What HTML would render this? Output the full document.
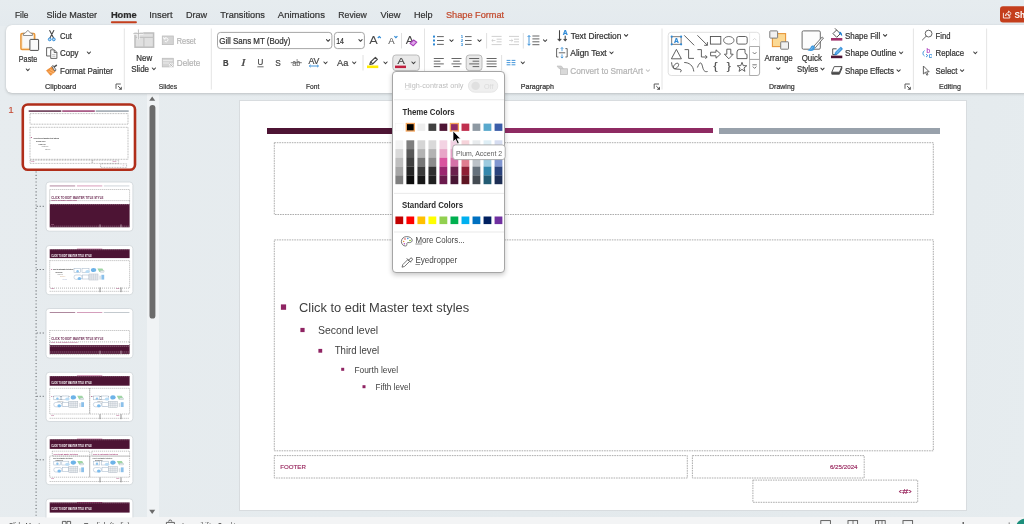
<!DOCTYPE html>
<html lang="en"><head><meta charset="utf-8"><title>PowerPoint - Slide Master</title>
<style>
*{box-sizing:border-box;margin:0;padding:0}
html,body{width:1024px;height:524px;overflow:hidden;background:#e6ebee}
body{font-family:"Liberation Sans", sans-serif;position:relative}
#app{position:absolute;left:0;top:0;width:1024px;height:524px;overflow:hidden;
 background:linear-gradient(100deg,#e7ecef 0%,#e5ebee 40%,#e3e9ec 70%,#e6ecef 100%)}
#tabbar{position:absolute;left:0;top:0;width:1024px;height:26px;background:linear-gradient(180deg,#e6ecef,#e4eaee)}
#ribbon{position:absolute;left:5.5px;top:25px;width:1030px;height:67.5px;background:#fff;border-radius:6px;
 box-shadow:0 1px 3px rgba(0,0,0,.18),0 0 1px rgba(0,0,0,.12)}
#leftpane{position:absolute;left:0;top:94px;width:160px;height:424px}
#track{position:absolute;left:146.6px;top:94px;width:12.4px;height:423.4px;background:#f0f3f5}
#slide{position:absolute;left:239.2px;top:99.8px;width:728px;height:411px;background:#fff;border:1px solid #d8dcdf}
.ph{position:absolute;border:1px dotted #9a9a9a}
.bar{position:absolute;top:128px;height:5.5px}
#status{position:absolute;left:0;top:517.4px;width:1024px;height:8px;background:#f3f4f5}
#dd{position:absolute;left:392.1px;top:71px;width:112.8px;height:202.3px;background:#fff;border:1px solid #a6a6a6;border-radius:4px;
 box-shadow:0 2px 5px rgba(0,0,0,.22)}
svg{position:absolute;left:0;top:0;overflow:visible;will-change:transform}
svg text{font-family:"Liberation Sans", sans-serif;white-space:pre}
#ribbon-items text{stroke-width:0.22px}
</style></head>
<body>
<div id="app">
<div id="tabbar"></div>
<div id="leftpane"></div><div id="track"></div>
<div id="slide"></div>
<div class="bar" style="left:266.5px;width:221.2px;background:#4d1434"></div>
<div class="bar" style="left:493.9px;width:219.4px;top:128.2px;height:4.6px;background:#8e2a62"></div>
<div class="bar" style="left:719.3px;width:221.2px;top:127.9px;height:5.9px;background:#98a1ab"></div>
<svg id="phs" width="1024" height="524" viewBox="0 0 1024 524"><rect x="274.30" y="142.70" width="659.00" height="71.80" fill="none" stroke="#8a8a8a" stroke-width="0.7" stroke-dasharray="1.6 0.9"/>
<rect x="274.30" y="239.90" width="659.00" height="210.90" fill="none" stroke="#8a8a8a" stroke-width="0.7" stroke-dasharray="1.6 0.9"/>
<rect x="274.30" y="455.60" width="413.00" height="22.40" fill="none" stroke="#8a8a8a" stroke-width="0.7" stroke-dasharray="1.6 0.9"/>
<rect x="692.40" y="455.60" width="171.80" height="22.40" fill="none" stroke="#8a8a8a" stroke-width="0.7" stroke-dasharray="1.6 0.9"/>
<rect x="752.90" y="480.10" width="164.80" height="22.20" fill="none" stroke="#8a8a8a" stroke-width="0.7" stroke-dasharray="1.6 0.9"/></svg>
<div id="status"></div>
<div id="ribbon"></div>
<svg id="main" width="1024" height="524" viewBox="0 0 1024 524">
<defs><clipPath id="cpl"><rect x="0" y="93" width="160" height="424.4"/></clipPath></defs>
<g id="thumbs" clip-path="url(#cpl)"><path d="M36.10 171.50L36.10 517.50" stroke="#6f7478" stroke-width="1.1" fill="none" stroke-dasharray="1.1 2.2"/>
<path d="M36.60 206.30L44.60 206.30" stroke="#6f7478" stroke-width="0.9" fill="none" stroke-dasharray="1.4 1.6"/>
<path d="M36.60 269.50L44.60 269.50" stroke="#6f7478" stroke-width="0.9" fill="none" stroke-dasharray="1.4 1.6"/>
<path d="M36.60 333.00L44.60 333.00" stroke="#6f7478" stroke-width="0.9" fill="none" stroke-dasharray="1.4 1.6"/>
<path d="M36.60 396.30L44.60 396.30" stroke="#6f7478" stroke-width="0.9" fill="none" stroke-dasharray="1.4 1.6"/>
<path d="M36.60 459.80L44.60 459.80" stroke="#6f7478" stroke-width="0.9" fill="none" stroke-dasharray="1.4 1.6"/>
<path d="M36.60 523.00L44.60 523.00" stroke="#6f7478" stroke-width="0.9" fill="none" stroke-dasharray="1.4 1.6"/>
<rect x="22.80" y="104.50" width="112.20" height="65.20" fill="#fff" stroke="#b02e1a" stroke-width="2.6" rx="5"/>
<text x="8.30" y="113.00" font-size="9.8" fill="#c4472f" stroke="#c4472f" stroke-width="0" style="stroke-width:0.1px">1</text>
<rect x="28.70" y="110.40" width="32.60" height="1.35" fill="#4d1434"/>
<rect x="62.20" y="110.40" width="32.60" height="1.35" fill="#8e2a62"/>
<rect x="95.70" y="110.40" width="33.00" height="1.35" fill="#8c97a1"/>
<rect x="30.00" y="113.60" width="98.00" height="10.60" fill="none" stroke="#777" stroke-width="0.55" stroke-dasharray="0.9 0.7"/>
<rect x="30.00" y="127.30" width="98.00" height="32.00" fill="none" stroke="#777" stroke-width="0.55" stroke-dasharray="0.9 0.7"/>
<rect x="30.90" y="137.10" width="0.90" height="0.90" fill="#a1306b"/>
<g transform="translate(33.40 138.70) scale(0.125)"><text x="0.00" y="0.00" font-size="20.0" fill="#2a2a2a" stroke="#2a2a2a" stroke-width="0" textLength="204.80" lengthAdjust="spacingAndGlyphs" font-weight="bold">Click to edit Master text styles</text></g>
<g transform="translate(36.00 141.80) scale(0.125)"><text x="0.00" y="0.00" font-size="16.8" fill="#333" stroke="#333" stroke-width="0" textLength="75.20" lengthAdjust="spacingAndGlyphs" font-weight="bold">Second level</text></g>
<g transform="translate(38.60 144.50) scale(0.125)"><text x="0.00" y="0.00" font-size="16.0" fill="#333" stroke="#333" stroke-width="0" textLength="56.00" lengthAdjust="spacingAndGlyphs" font-weight="bold">Third level</text></g>
<g transform="translate(41.80 147.30) scale(0.125)"><text x="0.00" y="0.00" font-size="16.0" fill="#555" stroke="#555" stroke-width="0" textLength="51.20" lengthAdjust="spacingAndGlyphs">Fourth level</text></g>
<g transform="translate(45.00 150.00) scale(0.125)"><text x="0.00" y="0.00" font-size="16.0" fill="#555" stroke="#555" stroke-width="0" textLength="41.60" lengthAdjust="spacingAndGlyphs">Fifth level</text></g>
<rect x="30.00" y="160.20" width="62.00" height="3.20" fill="none" stroke="#777" stroke-width="0.5" stroke-dasharray="0.9 0.7"/>
<rect x="92.60" y="160.20" width="26.00" height="3.20" fill="none" stroke="#777" stroke-width="0.5" stroke-dasharray="0.9 0.7"/>
<rect x="100.60" y="163.80" width="26.00" height="3.60" fill="none" stroke="#777" stroke-width="0.5" stroke-dasharray="0.9 0.7"/>
<g transform="translate(30.80 162.30) scale(0.125)"><text x="0.00" y="0.00" font-size="7.2" fill="#a1306b" stroke="#a1306b" stroke-width="0" textLength="28.80" lengthAdjust="spacingAndGlyphs">FOOTER</text></g>
<g transform="translate(112.40 162.30) scale(0.125)"><text x="0.00" y="0.00" font-size="7.2" fill="#a1306b" stroke="#a1306b" stroke-width="0" textLength="32.00" lengthAdjust="spacingAndGlyphs">6/25/2024</text></g>
<g transform="translate(122.60 166.20) scale(0.125)"><text x="0.00" y="0.00" font-size="8.8" fill="#a1306b" stroke="#a1306b" stroke-width="0" textLength="14.40" lengthAdjust="spacingAndGlyphs">‹#›</text></g>
<rect x="46.00" y="182.00" width="86.90" height="49.20" fill="#fff" stroke="#d3d8db" stroke-width="0.9" rx="3.2"/>
<rect x="49.70" y="185.20" width="25.50" height="1.40" fill="#c9aabb"/>
<rect x="76.90" y="185.20" width="25.40" height="1.40" fill="#e4b9cf"/>
<rect x="103.80" y="185.20" width="25.60" height="1.40" fill="#dde0e4"/>
<rect x="49.70" y="189.50" width="79.90" height="11.10" fill="none" stroke="#686868" stroke-width="0.5" stroke-dasharray="1 1"/>
<g transform="translate(51.20 198.90) scale(0.125)"><text x="0.00" y="0.00" font-size="24.0" fill="#6b2a52" stroke="#6b2a52" stroke-width="0" textLength="416.80" lengthAdjust="spacingAndGlyphs" font-weight="bold">CLICK TO EDIT MASTER TITLE STYLE</text></g>
<g transform="translate(51.20 201.20) scale(0.125)"><text x="0.00" y="0.00" font-size="13.6" fill="#8a2a62" stroke="#8a2a62" stroke-width="0" textLength="206.40" lengthAdjust="spacingAndGlyphs" font-weight="bold">Click to edit Master subtitle style</text></g>
<path d="M49.7 200.6V204 M129.6 200.6V204" fill="none" stroke="#686868" stroke-width="0.6" stroke-dasharray="1 1"/>
<rect x="49.70" y="204.00" width="79.90" height="23.30" fill="#4d1434"/>
<path d="M49.70 204.60L129.60 204.60" stroke="#e9dfe4" stroke-width="0.5" fill="none" stroke-dasharray="1 1"/>
<path d="M49.70 226.20L129.60 226.20" stroke="#e9dfe4" stroke-width="0.5" fill="none" stroke-dasharray="1 1"/>
<path d="M100 224.4V228 M121 224.4V228" fill="none" stroke="#efe6ea" stroke-width="0.6"/>
<g transform="translate(51.00 225.40) scale(0.125)"><text x="0.00" y="0.00" font-size="7.2" fill="#d99abb" stroke="#d99abb" stroke-width="0" textLength="24.00" lengthAdjust="spacingAndGlyphs">FOOTER</text></g>
<rect x="46.00" y="245.50" width="86.90" height="49.20" fill="#fff" stroke="#d3d8db" stroke-width="0.9" rx="3.2"/>
<rect x="76.90" y="248.70" width="25.40" height="1.00" fill="#b04a82"/>
<rect x="49.70" y="249.20" width="79.90" height="8.90" fill="#4d1434"/>
<path d="M49.70 249.70L129.60 249.70" stroke="#c9b3bf" stroke-width="0.5" fill="none" stroke-dasharray="1 1"/>
<g transform="translate(51.20 256.90) scale(0.125)"><text x="0.00" y="0.00" font-size="20.8" fill="#fff" stroke="#fff" stroke-width="0" textLength="324.80" lengthAdjust="spacingAndGlyphs" font-weight="bold">CLICK TO EDIT MASTER TITLE STYLE</text></g>
<rect x="49.70" y="260.60" width="79.90" height="27.50" fill="none" stroke="#686868" stroke-width="0.5" stroke-dasharray="1 1"/>
<rect x="51.30" y="269.10" width="0.80" height="0.80" fill="#a1306b"/><g transform="translate(52.90 270.10) scale(0.125)"><text x="0.00" y="0.00" font-size="15.2" fill="#222" stroke="#222" stroke-width="0" textLength="163.20" lengthAdjust="spacingAndGlyphs" font-weight="bold">Click to edit Master text styles</text></g><g transform="translate(55.40 273.00) scale(0.125)"><text x="0.00" y="0.00" font-size="12.8" fill="#333" stroke="#333" stroke-width="0" textLength="57.60" lengthAdjust="spacingAndGlyphs" font-weight="bold">Second level</text></g><g transform="translate(57.50 275.00) scale(0.125)"><text x="0.00" y="0.00" font-size="11.2" fill="#777" stroke="#777" stroke-width="0" textLength="44.80" lengthAdjust="spacingAndGlyphs">Third level</text></g><g transform="translate(60.00 277.30) scale(0.125)"><text x="0.00" y="0.00" font-size="10.4" fill="#c9a07a" stroke="#c9a07a" stroke-width="0" textLength="40.80" lengthAdjust="spacingAndGlyphs">Fourth level</text></g><g transform="translate(62.60 279.80) scale(0.125)"><text x="0.00" y="0.00" font-size="10.4" fill="#9aa6c8" stroke="#9aa6c8" stroke-width="0" textLength="36.00" lengthAdjust="spacingAndGlyphs">Fifth level</text></g>
<rect x="74.00" y="268.60" width="6.40" height="3.80" fill="#fff" stroke="#9fb3c8" stroke-width="0.5"/><rect x="82.00" y="268.60" width="7.00" height="3.80" fill="#fff" stroke="#9fb3c8" stroke-width="0.5"/><circle cx="77.60" cy="271.20" r="1.2" fill="#8cc4ef"/><ellipse cx="93.60" cy="270.00" rx="2.7" ry="2.1" fill="#6db3e8"/><ellipse cx="87.60" cy="271.60" rx="2.2" ry="1.5" fill="#b9dcf5"/><path d="M97.40 268.40h5l2 3.6h-5z" fill="#9fd6a4"/><rect x="100.40" y="270.60" width="3.60" height="1.80" fill="#e4e8ec" stroke="#b8c0c8" stroke-width="0.3"/><rect x="74.00" y="275.00" width="8.00" height="4.40" fill="#fff" stroke="#9fb3c8" stroke-width="0.5" rx="2"/><ellipse cx="79.40" cy="278.40" rx="1.8" ry="1.5" fill="#7dbcec"/><rect x="82.60" y="275.00" width="6.40" height="4.00" fill="#fff" stroke="#9fb3c8" stroke-width="0.5"/><rect x="89.00" y="274.00" width="9.00" height="6.00" fill="#eceff2" stroke="#aab4be" stroke-width="0.45"/><path d="M91.20 274.00v6 M93.40 274.00v6 M95.60 274.00v6 M89.00 276.00h9 M89.00 278.00h9" fill="none" stroke="#aab4be" stroke-width="0.3"/><rect x="99.40" y="275.60" width="1.40" height="4.00" fill="#d8dde2"/><rect x="101.40" y="274.80" width="2.80" height="4.80" fill="#8cc0ea"/>
<path d="M49.70 291.30L129.60 291.30" stroke="#686868" stroke-width="0.5" fill="none" stroke-dasharray="1 1"/>
<path d="M100 287.4V292.2 M121 287.4V292.2" fill="none" stroke="#444" stroke-width="0.6"/>
<g transform="translate(51.00 289.40) scale(0.125)"><text x="0.00" y="0.00" font-size="7.2" fill="#a1306b" stroke="#a1306b" stroke-width="0" textLength="24.00" lengthAdjust="spacingAndGlyphs">FOOTER</text></g><g transform="translate(116.00 289.40) scale(0.125)"><text x="0.00" y="0.00" font-size="7.2" fill="#a1306b" stroke="#a1306b" stroke-width="0" textLength="27.20" lengthAdjust="spacingAndGlyphs">6/25/2024</text></g>
<rect x="46.00" y="308.50" width="86.90" height="49.60" fill="#fff" stroke="#d3d8db" stroke-width="0.9" rx="3.2"/>
<rect x="49.70" y="312.10" width="25.50" height="0.80" fill="#9a6b86"/>
<rect x="76.90" y="312.10" width="25.40" height="0.80" fill="#c987ab"/>
<rect x="103.80" y="312.10" width="25.60" height="0.80" fill="#b4bbc2"/>
<rect x="49.70" y="330.50" width="79.90" height="11.40" fill="none" stroke="#686868" stroke-width="0.5" stroke-dasharray="1 1"/>
<g transform="translate(51.20 339.90) scale(0.125)"><text x="0.00" y="0.00" font-size="24.0" fill="#6b2a52" stroke="#6b2a52" stroke-width="0" textLength="416.80" lengthAdjust="spacingAndGlyphs" font-weight="bold">CLICK TO EDIT MASTER TITLE STYLE</text></g>
<g transform="translate(51.00 343.10) scale(0.125)"><text x="0.00" y="0.00" font-size="12.8" fill="#a1306b" stroke="#a1306b" stroke-width="0" textLength="212.00" lengthAdjust="spacingAndGlyphs">Click to edit Master text styles</text></g>
<path d="M49.7 341.9V345 M129.6 341.9V345" fill="none" stroke="#686868" stroke-width="0.6" stroke-dasharray="1 1"/>
<rect x="49.70" y="345.10" width="79.90" height="8.80" fill="#4d1434"/>
<path d="M49.70 346.30L129.60 346.30" stroke="#e9dfe4" stroke-width="0.5" fill="none" stroke-dasharray="1 1"/>
<path d="M49.70 352.00L129.60 352.00" stroke="#e9dfe4" stroke-width="0.5" fill="none" stroke-dasharray="1 1"/>
<path d="M49.70 354.60L129.60 354.60" stroke="#686868" stroke-width="0.5" fill="none" stroke-dasharray="1 1"/>
<path d="M100 350.6V355 M121 350.6V355" fill="none" stroke="#efe6ea" stroke-width="0.6"/>
<rect x="46.00" y="372.30" width="86.90" height="49.20" fill="#fff" stroke="#d3d8db" stroke-width="0.9" rx="3.2"/>
<rect x="76.90" y="375.50" width="25.40" height="1.00" fill="#b04a82"/>
<rect x="49.70" y="376.00" width="79.90" height="9.70" fill="#4d1434"/>
<path d="M49.70 376.60L129.60 376.60" stroke="#c9b3bf" stroke-width="0.5" fill="none" stroke-dasharray="1 1"/>
<g transform="translate(51.20 384.00) scale(0.125)"><text x="0.00" y="0.00" font-size="20.8" fill="#fff" stroke="#fff" stroke-width="0" textLength="324.80" lengthAdjust="spacingAndGlyphs" font-weight="bold">CLICK TO EDIT MASTER TITLE STYLE</text></g>
<rect x="49.70" y="388.30" width="40.00" height="25.70" fill="none" stroke="#686868" stroke-width="0.5" stroke-dasharray="1 1"/>
<rect x="89.70" y="388.30" width="39.90" height="25.70" fill="none" stroke="#686868" stroke-width="0.5" stroke-dasharray="1 1"/>
<rect x="51.40" y="396.00" width="0.80" height="0.80" fill="#a1306b"/><g transform="translate(53.00 397.00) scale(0.125)"><text x="0.00" y="0.00" font-size="15.2" fill="#222" stroke="#222" stroke-width="0" textLength="130.56" lengthAdjust="spacingAndGlyphs" font-weight="bold">Click to edit Master text styles</text></g><g transform="translate(55.50 399.90) scale(0.125)"><text x="0.00" y="0.00" font-size="12.8" fill="#333" stroke="#333" stroke-width="0" textLength="57.60" lengthAdjust="spacingAndGlyphs" font-weight="bold">Second level</text></g><g transform="translate(57.60 401.90) scale(0.125)"><text x="0.00" y="0.00" font-size="11.2" fill="#777" stroke="#777" stroke-width="0" textLength="44.80" lengthAdjust="spacingAndGlyphs">Third level</text></g><g transform="translate(60.10 404.20) scale(0.125)"><text x="0.00" y="0.00" font-size="10.4" fill="#c9a07a" stroke="#c9a07a" stroke-width="0" textLength="40.80" lengthAdjust="spacingAndGlyphs">Fourth level</text></g><g transform="translate(62.70 406.70) scale(0.125)"><text x="0.00" y="0.00" font-size="10.4" fill="#9aa6c8" stroke="#9aa6c8" stroke-width="0" textLength="36.00" lengthAdjust="spacingAndGlyphs">Fifth level</text></g>
<rect x="53.80" y="396.00" width="6.40" height="3.80" fill="#fff" stroke="#9fb3c8" stroke-width="0.5"/><rect x="61.80" y="396.00" width="7.00" height="3.80" fill="#fff" stroke="#9fb3c8" stroke-width="0.5"/><circle cx="57.40" cy="398.60" r="1.2" fill="#8cc4ef"/><ellipse cx="73.40" cy="397.40" rx="2.7" ry="2.1" fill="#6db3e8"/><ellipse cx="67.40" cy="399.00" rx="2.2" ry="1.5" fill="#b9dcf5"/><path d="M77.20 395.80h5l2 3.6h-5z" fill="#9fd6a4"/><rect x="80.20" y="398.00" width="3.60" height="1.80" fill="#e4e8ec" stroke="#b8c0c8" stroke-width="0.3"/><rect x="53.80" y="402.40" width="8.00" height="4.40" fill="#fff" stroke="#9fb3c8" stroke-width="0.5" rx="2"/><ellipse cx="59.20" cy="405.80" rx="1.8" ry="1.5" fill="#7dbcec"/><rect x="62.40" y="402.40" width="6.40" height="4.00" fill="#fff" stroke="#9fb3c8" stroke-width="0.5"/><rect x="68.80" y="401.40" width="9.00" height="6.00" fill="#eceff2" stroke="#aab4be" stroke-width="0.45"/><path d="M71.00 401.40v6 M73.20 401.40v6 M75.40 401.40v6 M68.80 403.40h9 M68.80 405.40h9" fill="none" stroke="#aab4be" stroke-width="0.3"/><rect x="79.20" y="403.00" width="1.40" height="4.00" fill="#d8dde2"/><rect x="81.20" y="402.20" width="2.80" height="4.80" fill="#8cc0ea"/>
<rect x="91.00" y="396.00" width="0.80" height="0.80" fill="#a1306b"/><g transform="translate(92.60 397.00) scale(0.125)"><text x="0.00" y="0.00" font-size="15.2" fill="#222" stroke="#222" stroke-width="0" textLength="130.56" lengthAdjust="spacingAndGlyphs" font-weight="bold">Click to edit Master text styles</text></g><g transform="translate(95.10 399.90) scale(0.125)"><text x="0.00" y="0.00" font-size="12.8" fill="#333" stroke="#333" stroke-width="0" textLength="57.60" lengthAdjust="spacingAndGlyphs" font-weight="bold">Second level</text></g><g transform="translate(97.20 401.90) scale(0.125)"><text x="0.00" y="0.00" font-size="11.2" fill="#777" stroke="#777" stroke-width="0" textLength="44.80" lengthAdjust="spacingAndGlyphs">Third level</text></g><g transform="translate(99.70 404.20) scale(0.125)"><text x="0.00" y="0.00" font-size="10.4" fill="#c9a07a" stroke="#c9a07a" stroke-width="0" textLength="40.80" lengthAdjust="spacingAndGlyphs">Fourth level</text></g><g transform="translate(102.30 406.70) scale(0.125)"><text x="0.00" y="0.00" font-size="10.4" fill="#9aa6c8" stroke="#9aa6c8" stroke-width="0" textLength="36.00" lengthAdjust="spacingAndGlyphs">Fifth level</text></g>
<rect x="93.40" y="396.00" width="6.40" height="3.80" fill="#fff" stroke="#9fb3c8" stroke-width="0.5"/><rect x="101.40" y="396.00" width="7.00" height="3.80" fill="#fff" stroke="#9fb3c8" stroke-width="0.5"/><circle cx="97.00" cy="398.60" r="1.2" fill="#8cc4ef"/><ellipse cx="113.00" cy="397.40" rx="2.7" ry="2.1" fill="#6db3e8"/><ellipse cx="107.00" cy="399.00" rx="2.2" ry="1.5" fill="#b9dcf5"/><path d="M116.80 395.80h5l2 3.6h-5z" fill="#9fd6a4"/><rect x="119.80" y="398.00" width="3.60" height="1.80" fill="#e4e8ec" stroke="#b8c0c8" stroke-width="0.3"/><rect x="93.40" y="402.40" width="8.00" height="4.40" fill="#fff" stroke="#9fb3c8" stroke-width="0.5" rx="2"/><ellipse cx="98.80" cy="405.80" rx="1.8" ry="1.5" fill="#7dbcec"/><rect x="102.00" y="402.40" width="6.40" height="4.00" fill="#fff" stroke="#9fb3c8" stroke-width="0.5"/><rect x="108.40" y="401.40" width="9.00" height="6.00" fill="#eceff2" stroke="#aab4be" stroke-width="0.45"/><path d="M110.60 401.40v6 M112.80 401.40v6 M115.00 401.40v6 M108.40 403.40h9 M108.40 405.40h9" fill="none" stroke="#aab4be" stroke-width="0.3"/><rect x="118.80" y="403.00" width="1.40" height="4.00" fill="#d8dde2"/><rect x="120.80" y="402.20" width="2.80" height="4.80" fill="#8cc0ea"/>
<path d="M49.70 418.30L129.60 418.30" stroke="#686868" stroke-width="0.5" fill="none" stroke-dasharray="1 1"/>
<path d="M100 414.2V419.2 M121 414.2V419.2" fill="none" stroke="#444" stroke-width="0.6"/>
<g transform="translate(51.00 416.20) scale(0.125)"><text x="0.00" y="0.00" font-size="7.2" fill="#a1306b" stroke="#a1306b" stroke-width="0" textLength="24.00" lengthAdjust="spacingAndGlyphs">FOOTER</text></g><g transform="translate(116.00 416.20) scale(0.125)"><text x="0.00" y="0.00" font-size="7.2" fill="#a1306b" stroke="#a1306b" stroke-width="0" textLength="27.20" lengthAdjust="spacingAndGlyphs">6/25/2024</text></g>
<rect x="46.00" y="435.50" width="86.90" height="49.20" fill="#fff" stroke="#d3d8db" stroke-width="0.9" rx="3.2"/>
<rect x="76.90" y="438.70" width="25.40" height="1.00" fill="#b04a82"/>
<rect x="49.70" y="439.20" width="79.90" height="9.70" fill="#4d1434"/>
<path d="M49.70 439.80L129.60 439.80" stroke="#c9b3bf" stroke-width="0.5" fill="none" stroke-dasharray="1 1"/>
<g transform="translate(51.20 447.00) scale(0.125)"><text x="0.00" y="0.00" font-size="20.8" fill="#fff" stroke="#fff" stroke-width="0" textLength="324.80" lengthAdjust="spacingAndGlyphs" font-weight="bold">CLICK TO EDIT MASTER TITLE STYLE</text></g>
<rect x="52.30" y="451.20" width="37.40" height="4.90" fill="none" stroke="#686868" stroke-width="0.5" stroke-dasharray="1 1"/>
<rect x="91.80" y="451.20" width="37.80" height="4.90" fill="none" stroke="#686868" stroke-width="0.5" stroke-dasharray="1 1"/>
<g transform="translate(53.50 455.10) scale(0.125)"><text x="0.00" y="0.00" font-size="18.4" fill="#a1306b" stroke="#a1306b" stroke-width="0" textLength="196.00" lengthAdjust="spacingAndGlyphs" font-weight="bold">Click to edit Master text styles</text></g>
<g transform="translate(93.00 455.10) scale(0.125)"><text x="0.00" y="0.00" font-size="18.4" fill="#a1306b" stroke="#a1306b" stroke-width="0" textLength="200.00" lengthAdjust="spacingAndGlyphs" font-weight="bold">Click to edit Master text styles</text></g>
<rect x="49.70" y="456.10" width="40.00" height="21.10" fill="none" stroke="#686868" stroke-width="0.5" stroke-dasharray="1 1"/>
<rect x="89.70" y="456.10" width="39.90" height="21.10" fill="none" stroke="#686868" stroke-width="0.5" stroke-dasharray="1 1"/>
<g transform="translate(53.00 458.70) scale(0.125)"><text x="0.00" y="0.00" font-size="13.6" fill="#444" stroke="#444" stroke-width="0" textLength="156.80" lengthAdjust="spacingAndGlyphs" font-weight="bold">Click to edit Master text styles</text></g>
<g transform="translate(55.40 461.30) scale(0.125)"><text x="0.00" y="0.00" font-size="12.0" fill="#333" stroke="#333" stroke-width="0" textLength="60.80" lengthAdjust="spacingAndGlyphs" font-weight="bold">Second level</text></g>
<rect x="53.80" y="461.20" width="6.40" height="3.80" fill="#fff" stroke="#9fb3c8" stroke-width="0.5"/><rect x="61.80" y="461.20" width="7.00" height="3.80" fill="#fff" stroke="#9fb3c8" stroke-width="0.5"/><circle cx="57.40" cy="463.80" r="1.2" fill="#8cc4ef"/><ellipse cx="73.40" cy="462.60" rx="2.7" ry="2.1" fill="#6db3e8"/><ellipse cx="67.40" cy="464.20" rx="2.2" ry="1.5" fill="#b9dcf5"/><path d="M77.20 461.00h5l2 3.6h-5z" fill="#9fd6a4"/><rect x="80.20" y="463.20" width="3.60" height="1.80" fill="#e4e8ec" stroke="#b8c0c8" stroke-width="0.3"/><rect x="53.80" y="467.60" width="8.00" height="4.40" fill="#fff" stroke="#9fb3c8" stroke-width="0.5" rx="2"/><ellipse cx="59.20" cy="471.00" rx="1.8" ry="1.5" fill="#7dbcec"/><rect x="62.40" y="467.60" width="6.40" height="4.00" fill="#fff" stroke="#9fb3c8" stroke-width="0.5"/><rect x="68.80" y="466.60" width="9.00" height="6.00" fill="#eceff2" stroke="#aab4be" stroke-width="0.45"/><path d="M71.00 466.60v6 M73.20 466.60v6 M75.40 466.60v6 M68.80 468.60h9 M68.80 470.60h9" fill="none" stroke="#aab4be" stroke-width="0.3"/><rect x="79.20" y="468.20" width="1.40" height="4.00" fill="#d8dde2"/><rect x="81.20" y="467.40" width="2.80" height="4.80" fill="#8cc0ea"/>
<g transform="translate(92.60 458.70) scale(0.125)"><text x="0.00" y="0.00" font-size="13.6" fill="#444" stroke="#444" stroke-width="0" textLength="156.80" lengthAdjust="spacingAndGlyphs" font-weight="bold">Click to edit Master text styles</text></g>
<g transform="translate(95.00 461.30) scale(0.125)"><text x="0.00" y="0.00" font-size="12.0" fill="#333" stroke="#333" stroke-width="0" textLength="60.80" lengthAdjust="spacingAndGlyphs" font-weight="bold">Second level</text></g>
<rect x="93.40" y="461.20" width="6.40" height="3.80" fill="#fff" stroke="#9fb3c8" stroke-width="0.5"/><rect x="101.40" y="461.20" width="7.00" height="3.80" fill="#fff" stroke="#9fb3c8" stroke-width="0.5"/><circle cx="97.00" cy="463.80" r="1.2" fill="#8cc4ef"/><ellipse cx="113.00" cy="462.60" rx="2.7" ry="2.1" fill="#6db3e8"/><ellipse cx="107.00" cy="464.20" rx="2.2" ry="1.5" fill="#b9dcf5"/><path d="M116.80 461.00h5l2 3.6h-5z" fill="#9fd6a4"/><rect x="119.80" y="463.20" width="3.60" height="1.80" fill="#e4e8ec" stroke="#b8c0c8" stroke-width="0.3"/><rect x="93.40" y="467.60" width="8.00" height="4.40" fill="#fff" stroke="#9fb3c8" stroke-width="0.5" rx="2"/><ellipse cx="98.80" cy="471.00" rx="1.8" ry="1.5" fill="#7dbcec"/><rect x="102.00" y="467.60" width="6.40" height="4.00" fill="#fff" stroke="#9fb3c8" stroke-width="0.5"/><rect x="108.40" y="466.60" width="9.00" height="6.00" fill="#eceff2" stroke="#aab4be" stroke-width="0.45"/><path d="M110.60 466.60v6 M112.80 466.60v6 M115.00 466.60v6 M108.40 468.60h9 M108.40 470.60h9" fill="none" stroke="#aab4be" stroke-width="0.3"/><rect x="118.80" y="468.20" width="1.40" height="4.00" fill="#d8dde2"/><rect x="120.80" y="467.40" width="2.80" height="4.80" fill="#8cc0ea"/>
<path d="M49.70 481.50L129.60 481.50" stroke="#686868" stroke-width="0.5" fill="none" stroke-dasharray="1 1"/>
<path d="M100 477.4V482.4 M121 477.4V482.4" fill="none" stroke="#444" stroke-width="0.6"/>
<g transform="translate(51.00 479.40) scale(0.125)"><text x="0.00" y="0.00" font-size="7.2" fill="#a1306b" stroke="#a1306b" stroke-width="0" textLength="24.00" lengthAdjust="spacingAndGlyphs">FOOTER</text></g><g transform="translate(116.00 479.40) scale(0.125)"><text x="0.00" y="0.00" font-size="7.2" fill="#a1306b" stroke="#a1306b" stroke-width="0" textLength="27.20" lengthAdjust="spacingAndGlyphs">6/25/2024</text></g>
<rect x="46.00" y="498.80" width="86.90" height="49.20" fill="#fff" stroke="#d3d8db" stroke-width="0.9" rx="3.2"/>
<rect x="76.90" y="502.00" width="25.40" height="1.00" fill="#b04a82"/>
<rect x="49.70" y="502.40" width="79.90" height="10.20" fill="#4d1434"/>
<path d="M49.70 503.00L129.60 503.00" stroke="#c9b3bf" stroke-width="0.5" fill="none" stroke-dasharray="1 1"/>
<g transform="translate(51.20 510.40) scale(0.125)"><text x="0.00" y="0.00" font-size="20.8" fill="#fff" stroke="#fff" stroke-width="0" textLength="324.80" lengthAdjust="spacingAndGlyphs" font-weight="bold">CLICK TO EDIT MASTER TITLE STYLE</text></g></g>
<g id="scroll"><path d="M149.2 100.8l3-4.2 3 4.2z" fill="#6b6b6b"/>
<rect x="149.50" y="104.90" width="5.90" height="213.70" fill="#6b6b6b" rx="2.9"/>
<path d="M149.2 509.8l3 4.2 3-4.2z" fill="#6b6b6b"/></g>
<g id="slidetext"><rect x="280.90" y="304.40" width="5.20" height="5.40" fill="#8f2463"/>
<text x="299.00" y="312.00" font-size="13.4" fill="#404040" stroke="#404040" stroke-width="0" textLength="170.10" lengthAdjust="spacingAndGlyphs">Click to edit Master text styles</text>
<rect x="300.40" y="327.90" width="4.20" height="4.20" fill="#8f2463"/>
<text x="317.90" y="333.70" font-size="11.2" fill="#404040" stroke="#404040" stroke-width="0" textLength="60.20" lengthAdjust="spacingAndGlyphs">Second level</text>
<rect x="318.40" y="348.90" width="3.80" height="3.80" fill="#8f2463"/>
<text x="334.70" y="354.00" font-size="10" fill="#404040" stroke="#404040" stroke-width="0" textLength="44.50" lengthAdjust="spacingAndGlyphs">Third level</text>
<rect x="341.20" y="367.80" width="3.00" height="3.00" fill="#8f2463"/>
<text x="354.40" y="372.50" font-size="8.9" fill="#404040" stroke="#404040" stroke-width="0" textLength="43.70" lengthAdjust="spacingAndGlyphs">Fourth level</text>
<rect x="362.50" y="385.20" width="3.00" height="3.00" fill="#8f2463"/>
<text x="375.60" y="390.20" font-size="8.9" fill="#404040" stroke="#404040" stroke-width="0" textLength="34.70" lengthAdjust="spacingAndGlyphs">Fifth level</text>
<text x="280.30" y="469.20" font-size="5.6" fill="#99285f" stroke="#99285f" stroke-width="0" textLength="25.60" lengthAdjust="spacingAndGlyphs" style="stroke-width:0.15px">FOOTER</text>
<text x="829.90" y="469.20" font-size="5.6" fill="#99285f" stroke="#99285f" stroke-width="0" textLength="27.70" lengthAdjust="spacingAndGlyphs" style="stroke-width:0.15px">6/25/2024</text>
<text x="898.60" y="494.20" font-size="7.6" fill="#99285f" stroke="#99285f" stroke-width="0" textLength="13.30" lengthAdjust="spacingAndGlyphs" style="stroke-width:0.15px">‹#›</text></g>
<g id="ribbon-items"><text x="15.00" y="18.20" font-size="9.6" fill="#333333" stroke="#333333" stroke-width="0" textLength="13.50" lengthAdjust="spacingAndGlyphs">File</text>
<text x="46.50" y="18.20" font-size="9.6" fill="#333333" stroke="#333333" stroke-width="0" textLength="50.50" lengthAdjust="spacingAndGlyphs">Slide Master</text>
<text x="110.90" y="18.20" font-size="9.6" fill="#2b2b2b" stroke="#2b2b2b" stroke-width="0" textLength="25.90" lengthAdjust="spacingAndGlyphs" font-weight="bold">Home</text>
<rect x="110.90" y="21.30" width="26.00" height="1.90" fill="#c43e1c" rx="0.9"/>
<text x="149.30" y="18.20" font-size="9.6" fill="#333333" stroke="#333333" stroke-width="0" textLength="23.20" lengthAdjust="spacingAndGlyphs">Insert</text>
<text x="185.90" y="18.20" font-size="9.6" fill="#333333" stroke="#333333" stroke-width="0" textLength="21.20" lengthAdjust="spacingAndGlyphs">Draw</text>
<text x="220.30" y="18.20" font-size="9.6" fill="#333333" stroke="#333333" stroke-width="0" textLength="44.60" lengthAdjust="spacingAndGlyphs">Transitions</text>
<text x="277.80" y="18.20" font-size="9.6" fill="#333333" stroke="#333333" stroke-width="0" textLength="47.10" lengthAdjust="spacingAndGlyphs">Animations</text>
<text x="338.30" y="18.20" font-size="9.6" fill="#333333" stroke="#333333" stroke-width="0" textLength="28.50" lengthAdjust="spacingAndGlyphs">Review</text>
<text x="380.50" y="18.20" font-size="9.6" fill="#333333" stroke="#333333" stroke-width="0" textLength="20.00" lengthAdjust="spacingAndGlyphs">View</text>
<text x="413.90" y="18.20" font-size="9.6" fill="#333333" stroke="#333333" stroke-width="0" textLength="18.70" lengthAdjust="spacingAndGlyphs">Help</text>
<text x="446.00" y="18.20" font-size="9.6" fill="#c2492c" stroke="#c2492c" stroke-width="0" textLength="58.10" lengthAdjust="spacingAndGlyphs">Shape Format</text>
<rect x="1000.00" y="6.20" width="30.00" height="16.30" fill="#c43e1c" rx="3"/>
<path d="M1003.4 12.8v5.2h6.4v-2.6 M1005.4 15.8c0.2-2 1.4-3 3.2-3.1v-1.7l2.6 2.5-2.6 2.5v-1.6c-1.4 0-2.4 0.4-3.2 1.4z" fill="none" stroke="#fff" stroke-width="0.85" stroke-linejoin="round"/>
<text x="1014.40" y="17.90" font-size="8.7" fill="#fff" stroke="#fff" stroke-width="0" textLength="23.00" lengthAdjust="spacingAndGlyphs" font-weight="bold" style="stroke-width:0">Share</text>
<path d="M124.30 28.50L124.30 89.50" stroke="#e1e1e1" stroke-width="0.9" fill="none" />
<path d="M211.30 28.50L211.30 89.50" stroke="#e1e1e1" stroke-width="0.9" fill="none" />
<path d="M424.50 28.50L424.50 89.50" stroke="#e1e1e1" stroke-width="0.9" fill="none" />
<path d="M662.00 28.50L662.00 89.50" stroke="#e1e1e1" stroke-width="0.9" fill="none" />
<path d="M913.40 28.50L913.40 89.50" stroke="#e1e1e1" stroke-width="0.9" fill="none" />
<path d="M986.60 28.50L986.60 89.50" stroke="#e1e1e1" stroke-width="0.9" fill="none" />
<path d="M401.50 33.00L401.50 48.50" stroke="#dcdcdc" stroke-width="0.9" fill="none" />
<path d="M363.00 55.00L363.00 70.50" stroke="#dcdcdc" stroke-width="0.9" fill="none" />
<path d="M486.60 33.00L486.60 48.50" stroke="#dcdcdc" stroke-width="0.9" fill="none" />
<path d="M523.30 33.00L523.30 48.50" stroke="#dcdcdc" stroke-width="0.9" fill="none" />
<path d="M501.60 55.00L501.60 70.50" stroke="#dcdcdc" stroke-width="0.9" fill="none" />
<rect x="21.00" y="33.70" width="13.60" height="15.60" fill="#f8f8f8" stroke="#e8973a" stroke-width="1.7" rx="1"/>
<rect x="22.10" y="34.80" width="11.40" height="13.40" fill="none" stroke="#fbdcae" stroke-width="0.7"/>
<path d="M23.4 35.5v-2.2h1.6l2.9-3 2.9 3h1.6v2.2z" fill="#fdfdfd" stroke="#7a7a7a" stroke-width="0.85" stroke-linejoin="round"/>
<rect x="29.90" y="39.40" width="8.70" height="11.00" fill="#fafafa" stroke="#505050" stroke-width="1" rx="0.6"/>
<text x="18.80" y="62.30" font-size="8.5" fill="#333333" stroke="#333333" stroke-width="0" textLength="18.50" lengthAdjust="spacingAndGlyphs">Paste</text>
<path d="M26.30 69.00l1.50 1.70l1.50 -1.70" fill="none" stroke="#3d3d3d" stroke-width="1.05" stroke-linecap="round" stroke-linejoin="round"/>
<path d="M49.7 30.6l4 7.6 M53.8 30.6l-4 7.6" fill="none" stroke="#4a4a4a" stroke-width="1.1" stroke-linecap="round"/>
<circle cx="49.7" cy="39.4" r="1.4" fill="#b9dbf5" stroke="#2f8ad6" stroke-width="1"/><circle cx="53.8" cy="39.4" r="1.4" fill="#b9dbf5" stroke="#2f8ad6" stroke-width="1"/>
<text x="60.00" y="38.70" font-size="8.5" fill="#333333" stroke="#333333" stroke-width="0" textLength="12.00" lengthAdjust="spacingAndGlyphs">Cut</text>
<path d="M50.6 56h-4v-8.3h5.2l1 1" fill="none" stroke="#555" stroke-width="0.9" stroke-linejoin="round"/>
<path d="M50.7 49.8h3.6l2.6 2.6v6h-6.2z M54.2 49.9v2.6h2.6" fill="#fff" stroke="#555" stroke-width="0.9" stroke-linejoin="round"/>
<path d="M52.2 54.6h3.2 M52.2 56.3h3.2" fill="none" stroke="#999" stroke-width="0.6"/>
<text x="60.00" y="56.20" font-size="8.5" fill="#333333" stroke="#333333" stroke-width="0" textLength="18.50" lengthAdjust="spacingAndGlyphs">Copy</text>
<path d="M87.30 52.00l1.60 1.70l1.60 -1.70" fill="none" stroke="#3d3d3d" stroke-width="1.05" stroke-linecap="round" stroke-linejoin="round"/>
<path d="M46.4 70.6l5.8-4 3 5-4.6 3.8z" fill="#f0913a" stroke="#e8842a" stroke-width="0.5" stroke-linejoin="round"/>
<path d="M48.6 71.4l4.4 2.2 M50 69.4l4 2.4" fill="none" stroke="#fbd3a8" stroke-width="0.6"/>
<path d="M51.8 66.4l1.4-0.9 2.9 4.6-1.3 1z" fill="#fff" stroke="#505050" stroke-width="0.8" stroke-linejoin="round"/>
<path d="M54.2 66.8l2.2-1.5" fill="none" stroke="#505050" stroke-width="1.5" stroke-linecap="round"/>
<text x="60.00" y="73.80" font-size="8.5" fill="#333333" stroke="#333333" stroke-width="0" textLength="52.80" lengthAdjust="spacingAndGlyphs">Format Painter</text>
<text x="45.00" y="88.80" font-size="7.9" fill="#333333" stroke="#333333" stroke-width="0" textLength="31.30" lengthAdjust="spacingAndGlyphs">Clipboard</text>
<path d="M116 88.8v-4.8h4.8 M118 86l3.2 3.2" fill="none" stroke="#555" stroke-width="0.95"/><path d="M121.8 86.4v3.4h-3.4z" fill="#555"/>
<rect x="135.00" y="33.00" width="18.60" height="14.20" fill="#e0e0e0" stroke="#bdbdbd" stroke-width="1.5"/>
<path d="M135 37.4h18.6 M143.9 37.4v9.6" fill="none" stroke="#c2c2c2" stroke-width="1.1"/>
<path d="M138.4 29.4v10 M133.4 33.6h10" fill="none" stroke="#fff" stroke-width="2.2"/>
<path d="M138.4 29.4v10 M133.4 33.6h10" fill="none" stroke="#b8b8b8" stroke-width="0.9"/>
<text x="136.30" y="60.70" font-size="8.5" fill="#333333" stroke="#333333" stroke-width="0" textLength="15.80" lengthAdjust="spacingAndGlyphs">New</text>
<text x="131.30" y="71.90" font-size="8.5" fill="#333333" stroke="#333333" stroke-width="0" textLength="17.70" lengthAdjust="spacingAndGlyphs">Slide</text>
<path d="M152.30 68.00l1.60 1.70l1.60 -1.70" fill="none" stroke="#3d3d3d" stroke-width="1.05" stroke-linecap="round" stroke-linejoin="round"/>
<rect x="162.30" y="36.00" width="11.00" height="8.60" fill="#d4d4d4" stroke="#bdbdbd" stroke-width="0.8"/>
<path d="M164.2 38.8a2 2 0 1 1 0.6 2.6 M163.6 37.2l0.4 1.9 1.9-0.4" fill="none" stroke="#fff" stroke-width="0.9"/>
<text x="176.80" y="44.00" font-size="8.5" fill="#b4b4b4" stroke="#b4b4b4" stroke-width="0" textLength="19.10" lengthAdjust="spacingAndGlyphs">Reset</text>
<rect x="162.30" y="58.30" width="11.00" height="8.60" fill="#d4d4d4" stroke="#bdbdbd" stroke-width="0.8"/>
<path d="M163 60.6h9.6 M163 63h6" fill="none" stroke="#f2f2f2" stroke-width="0.8"/>
<path d="M169.6 63.6l3.4 3.4 M173 63.6l-3.4 3.4" fill="none" stroke="#fff" stroke-width="1.8"/>
<path d="M169.6 63.6l3.4 3.4 M173 63.6l-3.4 3.4" fill="none" stroke="#b0b0b0" stroke-width="0.8"/>
<text x="176.80" y="66.00" font-size="8.5" fill="#b4b4b4" stroke="#b4b4b4" stroke-width="0" textLength="23.50" lengthAdjust="spacingAndGlyphs">Delete</text>
<text x="158.80" y="88.80" font-size="7.9" fill="#333333" stroke="#333333" stroke-width="0" textLength="18.30" lengthAdjust="spacingAndGlyphs">Slides</text>
<rect x="217.50" y="32.40" width="114.40" height="16.20" fill="#fff" stroke="#969696" stroke-width="0.85" rx="3"/>
<text x="219.30" y="44.00" font-size="8.5" fill="#333333" stroke="#333333" stroke-width="0" textLength="71.00" lengthAdjust="spacingAndGlyphs">Gill Sans MT (Body)</text>
<path d="M326.50 39.60l1.60 1.70l1.60 -1.70" fill="none" stroke="#3d3d3d" stroke-width="1.05" stroke-linecap="round" stroke-linejoin="round"/>
<rect x="334.40" y="32.40" width="30.00" height="16.20" fill="#fff" stroke="#969696" stroke-width="0.85" rx="3"/>
<text x="336.20" y="44.00" font-size="8.5" fill="#333333" stroke="#333333" stroke-width="0" textLength="7.70" lengthAdjust="spacingAndGlyphs">14</text>
<path d="M358.90 39.60l1.60 1.70l1.60 -1.70" fill="none" stroke="#3d3d3d" stroke-width="1.05" stroke-linecap="round" stroke-linejoin="round"/>
<text x="369.30" y="44.10" font-size="11.8" fill="#4a4a4a" stroke="#4a4a4a" stroke-width="0" textLength="8.50" lengthAdjust="spacingAndGlyphs" style="stroke-width:0">A</text>
<path d="M377.8 38l1.5-1.5 1.5 1.5" fill="none" stroke="#2f8ad6" stroke-width="1.15"/>
<text x="388.20" y="44.10" font-size="8.7" fill="#4a4a4a" stroke="#4a4a4a" stroke-width="0" textLength="6.40" lengthAdjust="spacingAndGlyphs" style="stroke-width:0">A</text>
<path d="M394.4 36.2l1.5 1.5 1.5-1.5" fill="none" stroke="#2f8ad6" stroke-width="1.15"/>
<text x="405.80" y="44.10" font-size="11.8" fill="#4a4a4a" stroke="#4a4a4a" stroke-width="0" textLength="8.20" lengthAdjust="spacingAndGlyphs" style="stroke-width:0">A</text>
<path d="M410 43.4l3.6-3.4 3.2 2.2-3.6 3.6z" fill="#dfa8ea" stroke="#a93fbb" stroke-width="1.1" stroke-linejoin="round"/>
<text x="223.00" y="65.60" font-size="9.4" fill="#444" stroke="#444" stroke-width="0" textLength="5.60" lengthAdjust="spacingAndGlyphs" font-weight="bold">B</text>
<text x="241.20" y="65.60" font-size="9.6" fill="#444" stroke="#444" stroke-width="0" textLength="4.20" lengthAdjust="spacingAndGlyphs" font-style="italic" style="font-family:'Liberation Serif',serif">I</text>
<text x="257.60" y="65.20" font-size="9.0" fill="#444" stroke="#444" stroke-width="0" textLength="5.80" lengthAdjust="spacingAndGlyphs">U</text>
<path d="M257.40 66.80L263.60 66.80" stroke="#444" stroke-width="0.8" fill="none" />
<text x="275.30" y="65.80" font-size="9.6" fill="#444" stroke="#444" stroke-width="0" textLength="5.50" lengthAdjust="spacingAndGlyphs">S</text>
<text x="292.20" y="65.50" font-size="8.3" fill="#5a5a5a" stroke="#5a5a5a" stroke-width="0" textLength="8.20" lengthAdjust="spacingAndGlyphs" style="stroke-width:0">ab</text>
<path d="M290.80 62.70L301.80 62.70" stroke="#5a5a5a" stroke-width="0.8" fill="none" />
<text x="308.40" y="63.50" font-size="9.0" fill="#444" stroke="#444" stroke-width="0" textLength="11.00" lengthAdjust="spacingAndGlyphs">AV</text>
<path d="M309.6 66h8.6 M310.6 64.9l-1.3 1.1 1.3 1.1 M317.2 64.9l1.3 1.1-1.3 1.1" fill="none" stroke="#2f8ad6" stroke-width="0.9"/>
<path d="M323.90 62.00l1.60 1.70l1.60 -1.70" fill="none" stroke="#3d3d3d" stroke-width="1.05" stroke-linecap="round" stroke-linejoin="round"/>
<text x="337.00" y="66.20" font-size="9.4" fill="#444" stroke="#444" stroke-width="0" textLength="11.30" lengthAdjust="spacingAndGlyphs">Aa</text>
<path d="M352.60 62.00l1.60 1.70l1.60 -1.70" fill="none" stroke="#3d3d3d" stroke-width="1.05" stroke-linecap="round" stroke-linejoin="round"/>
<path d="M369.8 64.4l0.8-2.4 4.8-4.6 2 2-4.8 4.6z M370.8 61.8l2 2" fill="#fff" stroke="#484848" stroke-width="1.15" stroke-linejoin="round"/>
<rect x="367.00" y="65.50" width="11.30" height="2.60" fill="#ffeb00"/>
<path d="M383.90 62.00l1.60 1.70l1.60 -1.70" fill="none" stroke="#3d3d3d" stroke-width="1.05" stroke-linecap="round" stroke-linejoin="round"/>
<rect x="392.80" y="55.00" width="26.60" height="15.60" fill="#e9e9e9" stroke="#b4b4b4" stroke-width="0.9" rx="3"/>
<text x="397.40" y="64.40" font-size="9.4" fill="#444" stroke="#444" stroke-width="0" textLength="7.30" lengthAdjust="spacingAndGlyphs">A</text>
<rect x="395.00" y="65.60" width="11.00" height="2.50" fill="#c0203f"/>
<path d="M411.90 62.00l1.60 1.70l1.60 -1.70" fill="none" stroke="#3d3d3d" stroke-width="1.05" stroke-linecap="round" stroke-linejoin="round"/>
<text x="306.00" y="88.80" font-size="7.9" fill="#333333" stroke="#333333" stroke-width="0" textLength="13.30" lengthAdjust="spacingAndGlyphs">Font</text>
<rect x="433.00" y="35.60" width="2.00" height="2.00" fill="#2f8ad6"/>
<path d="M437.00 36.60L443.80 36.60" stroke="#555" stroke-width="0.9" fill="none" />
<rect x="433.00" y="39.50" width="2.00" height="2.00" fill="#2f8ad6"/>
<path d="M437.00 40.50L443.80 40.50" stroke="#555" stroke-width="0.9" fill="none" />
<rect x="433.00" y="43.40" width="2.00" height="2.00" fill="#2f8ad6"/>
<path d="M437.00 44.40L443.80 44.40" stroke="#555" stroke-width="0.9" fill="none" />
<path d="M449.90 39.80l1.60 1.70l1.60 -1.70" fill="none" stroke="#3d3d3d" stroke-width="1.05" stroke-linecap="round" stroke-linejoin="round"/>
<g transform="translate(460.8 38.1) scale(0.125)"><text x="0.00" y="0.00" font-size="34" fill="#2f8ad6" stroke="#2f8ad6" stroke-width="0" font-weight="bold">1</text></g>
<path d="M465.00 36.60L471.60 36.60" stroke="#555" stroke-width="0.9" fill="none" />
<g transform="translate(460.8 42.0) scale(0.125)"><text x="0.00" y="0.00" font-size="34" fill="#2f8ad6" stroke="#2f8ad6" stroke-width="0" font-weight="bold">2</text></g>
<path d="M465.00 40.50L471.60 40.50" stroke="#555" stroke-width="0.9" fill="none" />
<g transform="translate(460.8 45.9) scale(0.125)"><text x="0.00" y="0.00" font-size="34" fill="#2f8ad6" stroke="#2f8ad6" stroke-width="0" font-weight="bold">3</text></g>
<path d="M465.00 44.40L471.60 44.40" stroke="#555" stroke-width="0.9" fill="none" />
<path d="M477.90 39.80l1.60 1.70l1.60 -1.70" fill="none" stroke="#3d3d3d" stroke-width="1.05" stroke-linecap="round" stroke-linejoin="round"/>
<path d="M491.6 36.4h10 M496.6 39.2h5 M496.6 41.8h5 M491.6 44.6h10" fill="none" stroke="#c4c4c4" stroke-width="0.8"/>
<path d="M491.8 40.5h3.6 M493.2 39.2l-1.4 1.3 1.4 1.3" fill="none" stroke="#c4c4c4" stroke-width="0.7"/>
<path d="M509 36.4h10 M514 39.2h5 M514 41.8h5 M509 44.6h10" fill="none" stroke="#c4c4c4" stroke-width="0.8"/>
<path d="M509.2 40.5h3.6 M511.4 39.2l1.4 1.3-1.4 1.3" fill="none" stroke="#c4c4c4" stroke-width="0.7"/>
<path d="M529 35.6v9.6 M527.6 37l1.4-1.5 1.4 1.5 M527.6 43.8l1.4 1.5 1.4-1.5" fill="none" stroke="#2f8ad6" stroke-width="0.9"/>
<path d="M532.4 36h7 M532.4 38.9h7 M532.4 41.8h7 M532.4 44.7h7" fill="none" stroke="#555" stroke-width="0.9"/>
<path d="M543.50 39.80l1.60 1.70l1.60 -1.70" fill="none" stroke="#3d3d3d" stroke-width="1.05" stroke-linecap="round" stroke-linejoin="round"/>
<path d="M433.8 58.5h10M433.8 61.2h6.6M433.8 63.9h10M433.8 66.6h6.6" fill="none" stroke="#555" stroke-width="0.9"/>
<path d="M451.5 58.5h10M453.2 61.2h6.6M451.5 63.9h10M453.2 66.6h6.6" fill="none" stroke="#555" stroke-width="0.9"/>
<rect x="466.20" y="55.00" width="15.80" height="15.60" fill="#e9e9e9" stroke="#b4b4b4" stroke-width="0.9" rx="3"/>
<path d="M469.2 58.5h10M472.6 61.2h6.6M469.2 63.9h10M472.6 66.6h6.6" fill="none" stroke="#555" stroke-width="0.9"/>
<path d="M486.6 58.5h10M486.6 61.2h10M486.6 63.9h10M486.6 66.6h10" fill="none" stroke="#555" stroke-width="0.9"/>
<path d="M506.6 60.4h3.8 M506.6 62.6h3.8 M506.6 64.8h3.8 M511.6 60.4h3.8 M511.6 62.6h3.8 M511.6 64.8h3.8" fill="none" stroke="#2f8ad6" stroke-width="0.9"/>
<path d="M521.20 62.00l1.60 1.70l1.60 -1.70" fill="none" stroke="#3d3d3d" stroke-width="1.05" stroke-linecap="round" stroke-linejoin="round"/>
<path d="M559.5 30.2v10.4 M557.7 38.8l1.8 1.9 1.8-1.9 M565.2 35.8v4.8 M563.6 39l1.6 1.7 1.6-1.7" fill="none" stroke="#444" stroke-width="1.05"/>
<text x="562.80" y="34.60" font-size="6.6" fill="#2f8ad6" stroke="#2f8ad6" stroke-width="0" textLength="5.00" lengthAdjust="spacingAndGlyphs" font-weight="bold">A</text>
<text x="570.80" y="38.75" font-size="8.5" fill="#333333" stroke="#333333" stroke-width="0" textLength="50.50" lengthAdjust="spacingAndGlyphs">Text Direction</text>
<path d="M624.50 34.60l1.60 1.70l1.60 -1.70" fill="none" stroke="#3d3d3d" stroke-width="1.05" stroke-linecap="round" stroke-linejoin="round"/>
<path d="M558.4 48.6h-1.8v8.4h1.8 M565.4 48.6h1.8v8.4h-1.8" fill="none" stroke="#555" stroke-width="0.9"/>
<path d="M558.8 52.8h6.4" fill="none" stroke="#555" stroke-width="0.9"/>
<path d="M562 47.6v3.6 M562 54.4v3.6 M560.8 48.8l1.2-1.3 1.2 1.3 M560.8 56.8l1.2 1.3 1.2-1.3" fill="none" stroke="#2f8ad6" stroke-width="0.8"/>
<text x="570.30" y="56.25" font-size="8.5" fill="#333333" stroke="#333333" stroke-width="0" textLength="36.40" lengthAdjust="spacingAndGlyphs">Align Text</text>
<path d="M609.90 52.00l1.60 1.70l1.60 -1.70" fill="none" stroke="#3d3d3d" stroke-width="1.05" stroke-linecap="round" stroke-linejoin="round"/>
<path d="M557 66h4.4l2 2.6h-4.4z" fill="#cfcfcf" stroke="#bdbdbd" stroke-width="0.6"/>
<rect x="560.60" y="68.80" width="6.80" height="5.60" fill="#d9d9d9" stroke="#bdbdbd" stroke-width="0.8"/>
<text x="570.30" y="73.90" font-size="8.5" fill="#b4b4b4" stroke="#b4b4b4" stroke-width="0" textLength="72.80" lengthAdjust="spacingAndGlyphs">Convert to SmartArt</text>
<path d="M646.30 69.80l1.60 1.70l1.60 -1.70" fill="none" stroke="#c4c4c4" stroke-width="1.05" stroke-linecap="round" stroke-linejoin="round"/>
<text x="520.80" y="88.80" font-size="7.9" fill="#333333" stroke="#333333" stroke-width="0" textLength="33.20" lengthAdjust="spacingAndGlyphs">Paragraph</text>
<path d="M654.2 88.8v-4.8h4.8 M656.2 86l3.2 3.2" fill="none" stroke="#555" stroke-width="0.95"/><path d="M660.0 86.4v3.4h-3.4z" fill="#555"/>
<rect x="668.20" y="32.30" width="91.40" height="43.20" fill="#fff" stroke="#dcdcdc" stroke-width="0.9" rx="3"/>
<rect x="749.60" y="46.60" width="10.00" height="12.80" fill="#fff" stroke="#9a9a9a" stroke-width="0.8"/>
<path d="M749.6 59.4h10v13.6a2.5 2.5 0 0 1-2.5 2.5h-7.5z" fill="#fff" stroke="#9a9a9a" stroke-width="0.8"/>
<path d="M749.60 32.80L749.60 46.60" stroke="#e6e6e6" stroke-width="0.8" fill="none" />
<path d="M752.8 40.2l1.8-1.8 1.8 1.8" fill="none" stroke="#d0d0d0" stroke-width="0.8"/>
<path d="M752.8 52.2l1.8 1.8 1.8-1.8" fill="none" stroke="#555" stroke-width="0.8"/>
<path d="M752.4 64.8h4.4 M752.8 66.6l1.8 1.8 1.8-1.8" fill="none" stroke="#555" stroke-width="0.8"/>
<rect x="671.70" y="36.70" width="9.40" height="7.60" fill="#fff" stroke="#6e6e6e" stroke-width="0.9"/>
<circle cx="671.70" cy="36.70" r="1.1" fill="#2f8ad6"/>
<circle cx="671.70" cy="44.30" r="1.1" fill="#2f8ad6"/>
<circle cx="681.10" cy="36.70" r="1.1" fill="#2f8ad6"/>
<circle cx="681.10" cy="44.30" r="1.1" fill="#2f8ad6"/>
<text x="674.00" y="43.00" font-size="6.8" fill="#2f8ad6" stroke="#2f8ad6" stroke-width="0" textLength="4.80" lengthAdjust="spacingAndGlyphs" font-weight="bold">A</text>
<path d="M684.20 35.30L694.20 45.30" stroke="#505050" stroke-width="0.9" fill="none" />
<path d="M697.4 35.3l10 10 M707.4 42.099999999999994v3.2h-3.2" fill="none" stroke="#505050" stroke-width="0.9"/>
<rect x="710.40" y="36.50" width="10.40" height="7.60" fill="none" stroke="#505050" stroke-width="0.9"/>
<ellipse cx="728.8" cy="40.3" rx="5.2" ry="3.8" fill="none" stroke="#505050" stroke-width="0.8"/>
<rect x="736.80" y="36.50" width="10.40" height="7.60" fill="none" stroke="#505050" stroke-width="0.9" rx="1.8"/>
<path d="M676.4 49.4l5 9.4h-10z" fill="none" stroke="#505050" stroke-width="0.9" stroke-linejoin="round"/>
<path d="M684.6 49.6h4v8.8h5.4" fill="none" stroke="#505050" stroke-width="0.9"/>
<path d="M697.4 49.6h4v7.4h5.6 M705.4 55.2l1.8 1.8-1.8 1.8" fill="none" stroke="#505050" stroke-width="0.9"/>
<path d="M710.6 52.2h5.4v-2.4l4.6 4.2-4.6 4.2v-2.4h-5.4z" fill="none" stroke="#505050" stroke-width="0.9" stroke-linejoin="round"/>
<path d="M726.8 49.2h4v5h2.4l-4.4 4.6-4.4-4.6h2.4z" fill="none" stroke="#505050" stroke-width="0.9" stroke-linejoin="round"/>
<path d="M737 52a2.6 2.6 0 0 1 2.6-2.6h5.4v3a2 2 0 0 0 2 2v4.2h-10z" fill="none" stroke="#505050" stroke-width="0.9" stroke-linejoin="round"/>
<path d="M671.6 62.300000000000004c0.2 3.4 1 5.6 2.4 6.2 2.4 1 6-3.6 4.2-5-1.8-1.2-5.4 2-4.6 4.4 0.8 2.2 5.6 0.4 7.4 2 0.8 0.8 0 1.8-1 2.2" fill="none" stroke="#505050" stroke-width="0.95"/>
<path d="M684.2 62.50000000000001c5 0 9 3 9.6 9" fill="none" stroke="#505050" stroke-width="0.9"/>
<path d="M697.4 67.5c2.4-6 4-6 5.2-0.6 1.2 5 2.8 5 5 4.6" fill="none" stroke="#505050" stroke-width="0.9"/>
<text x="713.60" y="70.30" font-size="10.5" fill="#505050" stroke="#505050" stroke-width="0" textLength="4.00" lengthAdjust="spacingAndGlyphs">{</text>
<text x="726.80" y="70.30" font-size="10.5" fill="#505050" stroke="#505050" stroke-width="0" textLength="4.00" lengthAdjust="spacingAndGlyphs">}</text>
<path d="M742.00 62.30L743.23 65.60L746.76 65.75L744.00 67.95L744.94 71.35L742.00 69.40L739.06 71.35L740.00 67.95L737.24 65.75L740.77 65.60z" fill="none" stroke="#505050" stroke-width="0.9" stroke-linejoin="round"/>
<rect x="772.40" y="33.60" width="13.20" height="13.00" fill="#fbd994" stroke="#e8973a" stroke-width="1.1"/>
<rect x="769.80" y="30.90" width="7.80" height="7.20" fill="#f1f1f1" stroke="#767676" stroke-width="0.95" rx="0.6"/>
<rect x="780.70" y="41.80" width="7.80" height="7.40" fill="#f1f1f1" stroke="#767676" stroke-width="0.95" rx="0.6"/>
<text x="764.40" y="60.90" font-size="8.5" fill="#333333" stroke="#333333" stroke-width="0" textLength="28.40" lengthAdjust="spacingAndGlyphs">Arrange</text>
<path d="M776.70 67.80l1.60 1.70l1.60 -1.70" fill="none" stroke="#3d3d3d" stroke-width="1.05" stroke-linecap="round" stroke-linejoin="round"/>
<rect x="802.10" y="30.90" width="18.20" height="18.30" fill="#fcfcfc" stroke="#6a6a6a" stroke-width="1" rx="1.3"/>
<path d="M822.2 37l1.3 1-8 9.6-1.7-1.3z" fill="#fff" stroke="#5a5a5a" stroke-width="0.85" stroke-linejoin="round"/>
<path d="M807.4 50.2c1.8-0.6 2.6-1.6 3.2-3 0.6-1.6 2.2-2.2 3.4-1.2 1.2 1 1.2 2.8-0.2 4-1.6 1.4-4.4 1.2-6.4 0.2z" fill="#3f9ae0"/>
<path d="M810.6 49.4c1-0.4 1.6-1.2 2-2.2" fill="none" stroke="#9fd0f5" stroke-width="0.6"/>
<text x="801.70" y="60.90" font-size="8.5" fill="#333333" stroke="#333333" stroke-width="0" textLength="20.30" lengthAdjust="spacingAndGlyphs">Quick</text>
<text x="797.00" y="72.30" font-size="8.5" fill="#333333" stroke="#333333" stroke-width="0" textLength="21.10" lengthAdjust="spacingAndGlyphs">Styles</text>
<path d="M820.90 68.20l1.60 1.70l1.60 -1.70" fill="none" stroke="#3d3d3d" stroke-width="1.05" stroke-linecap="round" stroke-linejoin="round"/>
<path d="M833 33.6l3.6-3.6 3.7 3.7-3.6 3.6z" fill="#fff" stroke="#4a4a4a" stroke-width="0.95" stroke-linejoin="round"/>
<path d="M836.6 30l-1.4-1.4" fill="none" stroke="#4a4a4a" stroke-width="0.95" stroke-linecap="round"/>
<path d="M839.6 31.6c1.6 0.6 2.6 2 2.6 4.6-1-1.2-1.8-1.8-3-2.2z" fill="#1f7fd0"/>
<rect x="831.00" y="38.00" width="11.30" height="2.60" fill="#a1306b"/>
<text x="845.00" y="38.75" font-size="8.5" fill="#333333" stroke="#333333" stroke-width="0" textLength="35.30" lengthAdjust="spacingAndGlyphs">Shape Fill</text>
<path d="M883.50 34.60l1.60 1.70l1.60 -1.70" fill="none" stroke="#3d3d3d" stroke-width="1.05" stroke-linecap="round" stroke-linejoin="round"/>
<path d="M836.6 48.8h-3.9v5.8h4" fill="none" stroke="#4a4a4a" stroke-width="0.95"/>
<path d="M834.6 55l0.8-2.8 4.8-4.8c0.8-0.8 2.8 1.2 2 2l-4.8 4.8z" fill="#3f9ae0" stroke="#1f7fd0" stroke-width="0.5" stroke-linejoin="round"/>
<path d="M836.4 53.2l4.4-4.4" fill="none" stroke="#bfe0f8" stroke-width="0.6"/>
<rect x="831.00" y="55.60" width="11.30" height="2.60" fill="#4d1434"/>
<text x="845.00" y="56.25" font-size="8.5" fill="#333333" stroke="#333333" stroke-width="0" textLength="51.30" lengthAdjust="spacingAndGlyphs">Shape Outline</text>
<path d="M899.50 52.00l1.60 1.70l1.60 -1.70" fill="none" stroke="#3d3d3d" stroke-width="1.05" stroke-linecap="round" stroke-linejoin="round"/>
<path d="M831.8 72.2v2h7.6l2.4-5.6v-2z" fill="#4a4a4a" stroke="#4a4a4a" stroke-width="0.9" stroke-linejoin="round"/>
<path d="M831.8 72.2l2.4-5.6h7.6l-2.4 5.6z" fill="#fff" stroke="#4a4a4a" stroke-width="0.9" stroke-linejoin="round"/>
<text x="845.00" y="73.90" font-size="8.5" fill="#333333" stroke="#333333" stroke-width="0" textLength="48.90" lengthAdjust="spacingAndGlyphs">Shape Effects</text>
<path d="M897.00 69.80l1.60 1.70l1.60 -1.70" fill="none" stroke="#3d3d3d" stroke-width="1.05" stroke-linecap="round" stroke-linejoin="round"/>
<text x="769.00" y="88.80" font-size="7.9" fill="#333333" stroke="#333333" stroke-width="0" textLength="25.70" lengthAdjust="spacingAndGlyphs">Drawing</text>
<path d="M905 88.8v-4.8h4.8 M907 86l3.2 3.2" fill="none" stroke="#555" stroke-width="0.95"/><path d="M910.8 86.4v3.4h-3.4z" fill="#555"/>
<circle cx="928.6" cy="33.6" r="3.4" fill="none" stroke="#555" stroke-width="0.9"/>
<path d="M926.20 36.20L922.40 40.00" stroke="#555" stroke-width="0.9" fill="none" stroke-linecap="round"/>
<text x="935.50" y="38.75" font-size="8.5" fill="#333333" stroke="#333333" stroke-width="0" textLength="14.90" lengthAdjust="spacingAndGlyphs">Find</text>
<text x="926.60" y="52.80" font-size="6.6" fill="#b146c2" stroke="#b146c2" stroke-width="0" textLength="3.60" lengthAdjust="spacingAndGlyphs">b</text>
<text x="928.80" y="58.00" font-size="6.6" fill="#2f8ad6" stroke="#2f8ad6" stroke-width="0" textLength="3.20" lengthAdjust="spacingAndGlyphs">c</text>
<path d="M924.6 50.6a3 3 0 0 0 0 5.4 M926 54.2l1.8 1.4-1.8 1.4" fill="none" stroke="#2f8ad6" stroke-width="0.9"/>
<text x="935.50" y="56.25" font-size="8.5" fill="#333333" stroke="#333333" stroke-width="0" textLength="28.60" lengthAdjust="spacingAndGlyphs">Replace</text>
<path d="M973.70 52.00l1.60 1.70l1.60 -1.70" fill="none" stroke="#3d3d3d" stroke-width="1.05" stroke-linecap="round" stroke-linejoin="round"/>
<path d="M923.4 66v8l2-1.8 1.4 3 1.2-0.6-1.4-2.8h2.6z" fill="#fff" stroke="#555" stroke-width="0.9" stroke-linejoin="round"/>
<text x="935.50" y="73.90" font-size="8.5" fill="#333333" stroke="#333333" stroke-width="0" textLength="21.90" lengthAdjust="spacingAndGlyphs">Select</text>
<path d="M960.50 69.80l1.60 1.70l1.60 -1.70" fill="none" stroke="#3d3d3d" stroke-width="1.05" stroke-linecap="round" stroke-linejoin="round"/>
<text x="939.00" y="88.80" font-size="7.9" fill="#333333" stroke="#333333" stroke-width="0" textLength="21.90" lengthAdjust="spacingAndGlyphs">Editing</text></g>
<g id="statusbar"><text x="8.80" y="529.20" font-size="8.5" fill="#444" stroke="#444" stroke-width="0" textLength="37.20" lengthAdjust="spacingAndGlyphs">Slide Master</text>
<path d="M62.4 521.4h3.6v6h-3.6z M67 521.4h3.6v6h-3.6z" fill="none" stroke="#555" stroke-width="0.9"/>
<text x="83.80" y="529.20" font-size="8.5" fill="#444" stroke="#444" stroke-width="0" textLength="46.20" lengthAdjust="spacingAndGlyphs">English (India)</text>
<path d="M168.6 521.6a1.6 1.6 0 0 1 3.2 0 M166.4 522.4h8v5h-8z" fill="none" stroke="#555" stroke-width="0.9"/>
<text x="181.00" y="529.20" font-size="8.5" fill="#444" stroke="#444" stroke-width="0" textLength="66.50" lengthAdjust="spacingAndGlyphs">Accessibility: Good to go</text>
<rect x="820.80" y="520.60" width="9.60" height="8.00" fill="none" stroke="#555" stroke-width="0.9"/>
<rect x="848.00" y="520.60" width="9.60" height="8.00" fill="none" stroke="#555" stroke-width="0.9"/>
<rect x="875.60" y="520.60" width="9.60" height="8.00" fill="none" stroke="#555" stroke-width="0.9"/>
<rect x="903.00" y="520.60" width="9.60" height="8.00" fill="none" stroke="#555" stroke-width="0.9"/>
<path d="M853 520.6v6 M878.6 520.6v6 M882 520.6v6" fill="none" stroke="#555" stroke-width="0.8"/>
<path d="M963.20 522.00L963.20 528.00" stroke="#444" stroke-width="1.2" fill="none" />
<path d="M1009.20 522.40L1009.20 528.00" stroke="#666" stroke-width="0.8" fill="none" />
<circle cx="1026" cy="529" r="10.6" fill="#1c8f7c"/></g>
</svg>
<div id="dd"></div>
<svg id="ddsvg" width="1024" height="524" viewBox="0 0 1024 524">
<text x="404.80" y="88.10" font-size="7.8" fill="#bdbdbd" stroke="#bdbdbd" stroke-width="0" textLength="58.70" lengthAdjust="spacingAndGlyphs">High-contrast only</text>
<path d="M404.80 89.20L409.60 89.20" stroke="#c8c8c8" stroke-width="0.5" fill="none" />
<rect x="468.40" y="79.60" width="29.40" height="12.60" fill="#efefef" stroke="#e2e2e2" stroke-width="0.8" rx="6.3"/>
<circle cx="475.6" cy="85.9" r="4.2" fill="#e0e0e0"/>
<text x="484.00" y="88.60" font-size="7.6" fill="#dadada" stroke="#dadada" stroke-width="0" textLength="9.50" lengthAdjust="spacingAndGlyphs">Off</text>
<path d="M394.00 99.80L504.00 99.80" stroke="#e6e6e6" stroke-width="0.9" fill="none" />
<text x="402.40" y="114.60" font-size="8.3" fill="#2b2b2b" stroke="#2b2b2b" stroke-width="0" textLength="52.30" lengthAdjust="spacingAndGlyphs" font-weight="bold">Theme Colors</text>
<rect x="395.40" y="123.60" width="7.80" height="7.30" fill="#ffffff" stroke="#f0f0f0" stroke-width="0.4"/>
<rect x="406.42" y="123.60" width="7.80" height="7.30" fill="#000000"/>
<rect x="417.44" y="123.60" width="7.80" height="7.30" fill="#eeeeee"/>
<rect x="428.46" y="123.60" width="7.80" height="7.30" fill="#404040"/>
<rect x="439.48" y="123.60" width="7.80" height="7.30" fill="#4e1434"/>
<rect x="450.50" y="123.60" width="7.80" height="7.30" fill="#8f2b68"/>
<rect x="461.52" y="123.60" width="7.80" height="7.30" fill="#c0304f"/>
<rect x="472.54" y="123.60" width="7.80" height="7.30" fill="#8e99a3"/>
<rect x="483.56" y="123.60" width="7.80" height="7.30" fill="#5aa9cd"/>
<rect x="494.58" y="123.60" width="7.80" height="7.30" fill="#3c5ea9"/>
<rect x="406.32" y="123.50" width="8.00" height="7.50" fill="none" stroke="#f3a55c" stroke-width="1.3"/>
<rect x="450.40" y="123.50" width="8.00" height="7.50" fill="none" stroke="#f3a55c" stroke-width="1.3"/>
<rect x="395.40" y="140.30" width="7.80" height="8.90" fill="#f2f2f2"/>
<rect x="395.40" y="149.10" width="7.80" height="8.90" fill="#d9d9d9"/>
<rect x="395.40" y="157.90" width="7.80" height="8.80" fill="#bfbfbf"/>
<rect x="395.40" y="166.60" width="7.80" height="8.90" fill="#a6a6a6"/>
<rect x="395.40" y="175.40" width="7.80" height="8.80" fill="#7f7f7f"/>
<rect x="406.42" y="140.30" width="7.80" height="8.90" fill="#7f7f7f"/>
<rect x="406.42" y="149.10" width="7.80" height="8.90" fill="#595959"/>
<rect x="406.42" y="157.90" width="7.80" height="8.80" fill="#404040"/>
<rect x="406.42" y="166.60" width="7.80" height="8.90" fill="#262626"/>
<rect x="406.42" y="175.40" width="7.80" height="8.80" fill="#0d0d0d"/>
<rect x="417.44" y="140.30" width="7.80" height="8.90" fill="#d5d5d5"/>
<rect x="417.44" y="149.10" width="7.80" height="8.90" fill="#b3b3b3"/>
<rect x="417.44" y="157.90" width="7.80" height="8.80" fill="#777777"/>
<rect x="417.44" y="166.60" width="7.80" height="8.90" fill="#3b3b3b"/>
<rect x="417.44" y="175.40" width="7.80" height="8.80" fill="#181818"/>
<rect x="428.46" y="140.30" width="7.80" height="8.90" fill="#d9d9d9"/>
<rect x="428.46" y="149.10" width="7.80" height="8.90" fill="#b3b3b3"/>
<rect x="428.46" y="157.90" width="7.80" height="8.80" fill="#8c8c8c"/>
<rect x="428.46" y="166.60" width="7.80" height="8.90" fill="#303030"/>
<rect x="428.46" y="175.40" width="7.80" height="8.80" fill="#202020"/>
<rect x="439.48" y="140.30" width="7.80" height="8.90" fill="#f3d3e3"/>
<rect x="439.48" y="149.10" width="7.80" height="8.90" fill="#e8a6c8"/>
<rect x="439.48" y="157.90" width="7.80" height="8.80" fill="#d9559f"/>
<rect x="439.48" y="166.60" width="7.80" height="8.90" fill="#9b2770"/>
<rect x="439.48" y="175.40" width="7.80" height="8.80" fill="#6b1a4d"/>
<rect x="450.50" y="140.30" width="7.80" height="8.90" fill="#f1d0e2"/>
<rect x="450.50" y="149.10" width="7.80" height="8.90" fill="#e3a1c6"/>
<rect x="450.50" y="157.90" width="7.80" height="8.80" fill="#d572a9"/>
<rect x="450.50" y="166.60" width="7.80" height="8.90" fill="#6b204e"/>
<rect x="450.50" y="175.40" width="7.80" height="8.80" fill="#481534"/>
<rect x="461.52" y="140.30" width="7.80" height="8.90" fill="#f6d3da"/>
<rect x="461.52" y="149.10" width="7.80" height="8.90" fill="#edaab5"/>
<rect x="461.52" y="157.90" width="7.80" height="8.80" fill="#e07d8f"/>
<rect x="461.52" y="166.60" width="7.80" height="8.90" fill="#8f2035"/>
<rect x="461.52" y="175.40" width="7.80" height="8.80" fill="#5f1523"/>
<rect x="472.54" y="140.30" width="7.80" height="8.90" fill="#e8ebed"/>
<rect x="472.54" y="149.10" width="7.80" height="8.90" fill="#d2d6da"/>
<rect x="472.54" y="157.90" width="7.80" height="8.80" fill="#bbc2c8"/>
<rect x="472.54" y="166.60" width="7.80" height="8.90" fill="#65717c"/>
<rect x="472.54" y="175.40" width="7.80" height="8.80" fill="#444b52"/>
<rect x="483.56" y="140.30" width="7.80" height="8.90" fill="#deeef5"/>
<rect x="483.56" y="149.10" width="7.80" height="8.90" fill="#bdddeb"/>
<rect x="483.56" y="157.90" width="7.80" height="8.80" fill="#9ccbe0"/>
<rect x="483.56" y="166.60" width="7.80" height="8.90" fill="#3388ad"/>
<rect x="483.56" y="175.40" width="7.80" height="8.80" fill="#225b73"/>
<rect x="494.58" y="140.30" width="7.80" height="8.90" fill="#d5dcf0"/>
<rect x="494.58" y="149.10" width="7.80" height="8.90" fill="#aab9e0"/>
<rect x="494.58" y="157.90" width="7.80" height="8.80" fill="#8096d1"/>
<rect x="494.58" y="166.60" width="7.80" height="8.90" fill="#2c447d"/>
<rect x="494.58" y="175.40" width="7.80" height="8.80" fill="#1d2d53"/>
<path d="M394.00 193.40L504.00 193.40" stroke="#e6e6e6" stroke-width="0.9" fill="none" />
<text x="402.00" y="207.70" font-size="8.3" fill="#2b2b2b" stroke="#2b2b2b" stroke-width="0" textLength="61.00" lengthAdjust="spacingAndGlyphs" font-weight="bold">Standard Colors</text>
<rect x="395.40" y="216.50" width="7.80" height="7.60" fill="#c00000"/>
<rect x="406.42" y="216.50" width="7.80" height="7.60" fill="#ff0000"/>
<rect x="417.44" y="216.50" width="7.80" height="7.60" fill="#ffc000"/>
<rect x="428.46" y="216.50" width="7.80" height="7.60" fill="#ffff00"/>
<rect x="439.48" y="216.50" width="7.80" height="7.60" fill="#92d050"/>
<rect x="450.50" y="216.50" width="7.80" height="7.60" fill="#00b050"/>
<rect x="461.52" y="216.50" width="7.80" height="7.60" fill="#00b0f0"/>
<rect x="472.54" y="216.50" width="7.80" height="7.60" fill="#0070c0"/>
<rect x="483.56" y="216.50" width="7.80" height="7.60" fill="#002060"/>
<rect x="494.58" y="216.50" width="7.80" height="7.60" fill="#7030a0"/>
<path d="M394.00 232.00L504.00 232.00" stroke="#e6e6e6" stroke-width="0.9" fill="none" />
<path d="M406.6 236.6c-3 0-5.2 2.2-5.2 5 0 2.6 2 4.4 4 4.4 1.4 0 1.6-1 1.4-1.8-0.2-0.8 0.2-1.6 1.2-1.6h1.6c1.6 0 2.6-1 2.6-2.4 0-2-2.4-3.6-5.6-3.6z" fill="#fff" stroke="#555" stroke-width="0.8"/>
<circle cx="403.6" cy="241.4" r="0.75" fill="#e8973a"/>
<circle cx="405" cy="239" r="0.75" fill="#d13438"/>
<circle cx="407.8" cy="238.6" r="0.75" fill="#2f8ad6"/>
<circle cx="410" cy="240.4" r="0.75" fill="#6bb700"/>
<circle cx="404.4" cy="243.8" r="0.75" fill="#b146c2"/>
<text x="415.40" y="242.90" font-size="8.5" fill="#444" stroke="#444" stroke-width="0" textLength="49.30" lengthAdjust="spacingAndGlyphs">More Colors...</text>
<path d="M415.40 244.00L422.20 244.00" stroke="#444" stroke-width="0.6" fill="none" />
<path d="M402 267.2l0.8-2.6 5-5 1.8 1.8-5 5z" fill="#fff" stroke="#555" stroke-width="0.8" stroke-linejoin="round"/>
<path d="M407 258.6l3.4 3.4 M408.6 260.2l1.6-1.8a1.3 1.3 0 0 1 1.9 1.9l-1.8 1.6" fill="none" stroke="#555" stroke-width="0.9" stroke-linecap="round"/>
<text x="415.40" y="263.30" font-size="8.5" fill="#444" stroke="#444" stroke-width="0" textLength="41.90" lengthAdjust="spacingAndGlyphs">Eyedropper</text>
<path d="M415.40 264.50L420.00 264.50" stroke="#444" stroke-width="0.6" fill="none" />
<rect x="452.70" y="144.90" width="52.50" height="14.70" fill="#fff" stroke="#a8a8a8" stroke-width="0.9" rx="3"/>
<text x="456.00" y="155.50" font-size="7.4" fill="#606060" stroke="#606060" stroke-width="0" textLength="46.10" lengthAdjust="spacingAndGlyphs">Plum, Accent 2</text>
<path d="M453 130.8v11l2.5-2.3 2 4.3 1.7-0.8-2-4.2h3.4z" fill="#000" stroke="#fff" stroke-width="0.7" stroke-linejoin="round"/>
</svg>
</div>
</body></html>
